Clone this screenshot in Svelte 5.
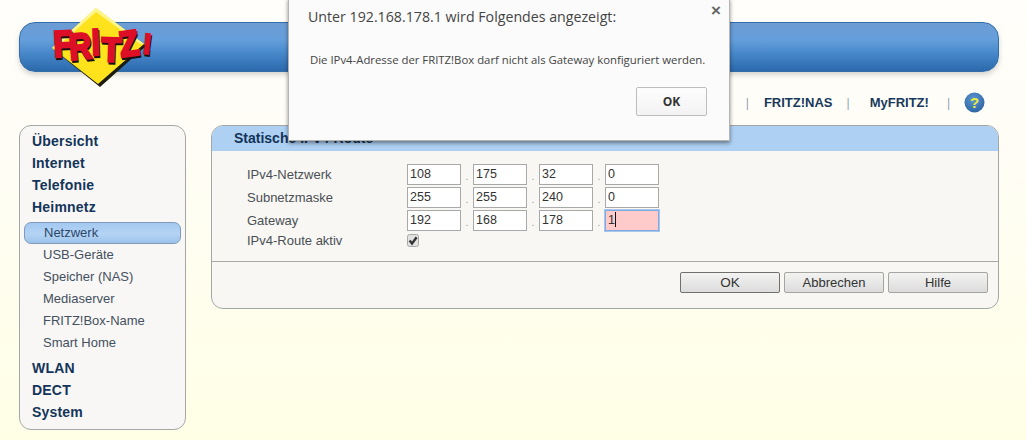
<script>
  const topItems = ['Übersicht', 'Internet', 'Telefonie', 'Heimnetz'];
  const subItems = ['Netzwerk', 'USB-Geräte', 'Speicher (NAS)', 'Mediaserver', 'FRITZ!Box-Name', 'Smart Home'];
  const bottomItems = ['WLAN', 'DECT', 'System'];
  const rows = [
    { label: 'IPv4-Netzwerk', values: ['108', '175', '32', '0'] },
    { label: 'Subnetzmaske', values: ['255', '255', '240', '0'] },
    { label: 'Gateway', values: ['192', '168', '178', '1'] }
  ];
  const letters = [
    { c: 'F', x: 54, y: 57, r: -3, s: 37, w: 0.85 },
    { c: 'R', x: 70, y: 60, r: -5, s: 37, w: 0.85 },
    { c: 'I', x: 92, y: 55, r: -2, s: 37, w: 0.8 },
    { c: 'T', x: 101, y: 61, r: 2, s: 34, w: 0.95 },
    { c: 'Z', x: 121, y: 57, r: -8, s: 36, w: 0.88 },
    { c: '!', x: 142, y: 53, r: 6, s: 28, w: 0.9 }
  ];
</script>

<div class="page">
  <header class="topbar"></header>

  <nav class="links">
    <a href="#inhalt" class="link">Inhalt</a>
    <span class="sep first">|</span>
    <a href="#nas" class="link">FRITZ!NAS</a>
    <span class="sep second">|</span>
    <a href="#myfritz" class="link">MyFRITZ!</a>
    <span class="sep third">|</span>
    <svg class="help" width="21" height="21" viewBox="0 0 21 21">
      <defs>
        <radialGradient id="helpBg" cx="45%" cy="35%" r="70%">
          <stop offset="0" stop-color="#5f97d2" />
          <stop offset="1" stop-color="#2a62a3" />
        </radialGradient>
      </defs>
      <circle cx="10.5" cy="10.5" r="10" fill="url(#helpBg)" />
      <text x="10.5" y="16" text-anchor="middle" class="help-mark">?</text>
    </svg>
  </nav>

  <div class="columns">
    <aside class="sidebar">
      {#each topItems as item}
        <div class="top-item">{item}</div>
      {/each}
      <div class="sub-list">
        {#each subItems as item, i}
          <div class="sub-item" class:active={i === 0}>{item}</div>
        {/each}
      </div>
      {#each bottomItems as item}
        <div class="top-item">{item}</div>
      {/each}
    </aside>

    <main class="panel">
      <h2 class="panel-title">Statische IPv4-Route</h2>
      <div class="form">
        {#each rows as row, r}
          <div class="form-row">
            <span class="label">{row.label}</span>
            <div class="octets">
              {#each row.values as value, i}
                {#if i > 0}<span class="dot">.</span>{/if}
                <div class="octet" class:invalid={r === 2 && i === 3}>
                  {value}{#if r === 2 && i === 3}<i class="caret"></i>{/if}
                </div>
              {/each}
            </div>
          </div>
        {/each}
        <div class="form-row check-row">
          <span class="label">IPv4-Route aktiv</span>
          <svg class="check" width="12" height="13" viewBox="0 0 12 13">
            <rect x="0.5" y="0.5" width="11" height="12" rx="2" fill="#e2e2e2" stroke="#a8a8a8" />
            <path d="M2.6 6.6 L5 9.6 L9.6 3.2" fill="none" stroke="#333" stroke-width="2.4" />
          </svg>
        </div>
      </div>
      <div class="actions">
        <button class="btn">OK</button>
        <button class="btn light">Abbrechen</button>
        <button class="btn light">Hilfe</button>
      </div>
    </main>
  </div>

  <svg class="logo" width="110" height="90" viewBox="45 4 110 90">
    <path d="M96 9 L145 45 L99 86 L53 49 Z" fill="#1c1c10" transform="translate(1 1)" />
    <path d="M96 8 L144 44 L98 84 L52 48 Z" fill="#fde21c" />
    <path d="M96 8 L144 44 L140 44 L96 12 L56 48 L52 48 Z" fill="#fff58c" />
    {#each letters as l}
      <text class="logo-shadow" font-size={l.s} transform="translate({l.x + 1} {l.y + 2}) rotate({l.r}) scale({l.w} 1)">{l.c}</text>
    {/each}
    {#each letters as l}
      <text class="logo-letter" font-size={l.s} transform="translate({l.x} {l.y}) rotate({l.r}) scale({l.w} 1)">{l.c}</text>
    {/each}
  </svg>

  <div class="dialog">
    <span class="close">×</span>
    <div class="dialog-title">Unter 192.168.178.1 wird Folgendes angezeigt:</div>
    <div class="dialog-text">Die IPv4-Adresse der FRITZ!Box darf nicht als Gateway konfiguriert werden.</div>
    <div class="dialog-actions">
      <button class="dialog-ok">OK</button>
    </div>
  </div>
</div>

<style>
  :global(body) {
    margin: 0;
    background: #fff;
  }

  .page {
    position: relative;
    box-sizing: border-box;
    width: 1026px;
    height: 440px;
    overflow: hidden;
    padding: 22px 27px 0 19px;
    background: linear-gradient(#fffefa 0, #fffdf6 130px, #ffffe6 100%);
    font-family: "Liberation Sans", Arial, sans-serif;
  }

  .topbar {
    height: 50px;
    box-sizing: border-box;
    border: 1px solid #336ea8;
    border-radius: 16px;
    background: linear-gradient(#6c9cd4 0, #659fdb 35%, #4586c9 65%, #2b69ab 100%);
    box-shadow: 0 3px 5px rgba(120, 120, 120, 0.3);
  }

  .links {
    display: flex;
    align-items: center;
    justify-content: flex-end;
    height: 21px;
    margin-top: 20px;
    padding-right: 14px;
    font-size: 13px;
    font-weight: bold;
  }

  .link {
    color: #173a5c;
    text-decoration: none;
  }

  .sep {
    color: #8fa3b8;
    font-weight: normal;
    font-size: 12px;
  }

  .sep.first {
    margin: 0 15px 0 16px;
  }

  .sep.second {
    margin: 0 20px 0 14px;
  }

  .sep.third {
    margin: 0 14px 0 18px;
  }

  .help-mark {
    font: bold 15px "Liberation Sans", sans-serif;
    fill: #e9ee3a;
  }

  .columns {
    display: grid;
    grid-template-columns: 167px 788px;
    gap: 25px;
    margin-top: 12px;
    align-items: start;
  }

  .sidebar {
    box-sizing: border-box;
    height: 305px;
    padding: 4px 4px 0;
    border: 1px solid #a4a8a4;
    border-radius: 12px;
    background: #f8f7f5;
  }

  .top-item {
    height: 22px;
    padding-left: 8px;
    font-size: 14px;
    font-weight: bold;
    line-height: 22px;
    color: #14345a;
    letter-spacing: 0.2px;
  }

  .sub-list {
    margin: 4px 0 3px;
  }

  .sub-item {
    box-sizing: border-box;
    height: 22px;
    padding-left: 19px;
    font-size: 13px;
    line-height: 21px;
    color: #44505f;
  }

  .sub-item.active {
    border: 1px solid #7f9bb9;
    border-radius: 7px;
    padding-left: 19px;
    line-height: 19px;
    color: #29476a;
    background: linear-gradient(#a3c8f0 0, #b5d4f4 55%, #9cc2ea 100%);
  }

  .panel {
    box-sizing: border-box;
    height: 184px;
    border: 1px solid #a4a8a4;
    border-radius: 12px;
    background: #f8f7f3;
    overflow: hidden;
  }

  .panel-title {
    box-sizing: border-box;
    height: 25px;
    margin: 0;
    padding-left: 22px;
    font-size: 14px;
    line-height: 25px;
    color: #14345a;
    background: #aed0f2;
  }

  .form {
    height: 111px;
    box-sizing: border-box;
    padding: 13px 0 0 35px;
    border-bottom: 1px solid #a9aaa6;
  }

  .form-row {
    display: flex;
    align-items: center;
    height: 21px;
    margin-bottom: 2px;
    font-size: 13px;
    color: #4a4f55;
  }

  .label {
    width: 160px;
  }

  .octets {
    display: flex;
    align-items: center;
  }

  .octet {
    box-sizing: border-box;
    width: 54px;
    height: 21px;
    padding-left: 2px;
    border: 1px solid #a9a9a9;
    background: #fff;
    font-size: 12.5px;
    line-height: 19px;
    color: #333;
  }

  .octet.invalid {
    border-color: #7ea8e2;
    background: #ffcaca;
    box-shadow: 0 0 0 1px #a9c6ef;
  }

  .caret {
    display: inline-block;
    width: 1px;
    height: 15px;
    background: #111;
    vertical-align: -3px;
  }

  .dot {
    width: 12px;
    text-align: center;
    color: #9a9a9a;
    font-size: 10px;
    padding-top: 3px;
  }

  .check-row {
    height: 14px;
    margin-top: 2px;
  }

  .actions {
    display: flex;
    justify-content: flex-end;
    gap: 4px;
    padding: 10px 10px 0 0;
  }

  .btn {
    width: 100px;
    height: 21px;
    padding: 0;
    border: 1px solid #70706c;
    border-radius: 2px;
    background: linear-gradient(#f3f3f2, #dcdcdc);
    font: 13.5px "Liberation Sans", sans-serif;
    color: #333;
  }

  .btn.light {
    border-color: #a5a5a2;
    font-size: 13px;
  }

  .logo {
    position: absolute;
    left: 45px;
    top: 4px;
    overflow: visible;
  }

  .logo-letter,
  .logo-shadow {
    font-family: "Liberation Sans", sans-serif;
    font-weight: bold;
    stroke-width: 2.4px;
    stroke-linejoin: miter;
  }

  .logo-letter {
    fill: #dc0f26;
    stroke: #dc0f26;
  }

  .logo-shadow {
    fill: #1b1010;
    stroke: #1b1010;
  }

  .dialog {
    position: absolute;
    left: 288px;
    top: -2px;
    box-sizing: border-box;
    width: 442px;
    height: 143px;
    border: 1px solid #b4b4b4;
    background: #fbfbfb;
    box-shadow: 0 2px 4px rgba(0, 0, 0, 0.45);
    font-family: "Open Sans", sans-serif;
  }

  .close {
    position: absolute;
    right: 8px;
    top: 2px;
    font: bold 17px "Liberation Sans", sans-serif;
    color: #666;
  }

  .dialog-title {
    margin: 8px 0 0 19px;
    font-size: 14.2px;
    line-height: 20px;
    color: #444;
  }

  .dialog-text {
    margin: 25px 0 0 21px;
    font-size: 11.35px;
    line-height: 16px;
    color: #444;
    white-space: nowrap;
  }

  .dialog-actions {
    display: flex;
    justify-content: flex-end;
    margin: 19px 22px 0 0;
  }

  .dialog-ok {
    width: 71px;
    height: 29px;
    padding: 0;
    border: 1px solid #bdbdbd;
    border-radius: 2px;
    background: linear-gradient(#fdfdfd, #f3f3f3);
    font: bold 12px "Open Sans", sans-serif;
    color: #333;
  }
</style>
